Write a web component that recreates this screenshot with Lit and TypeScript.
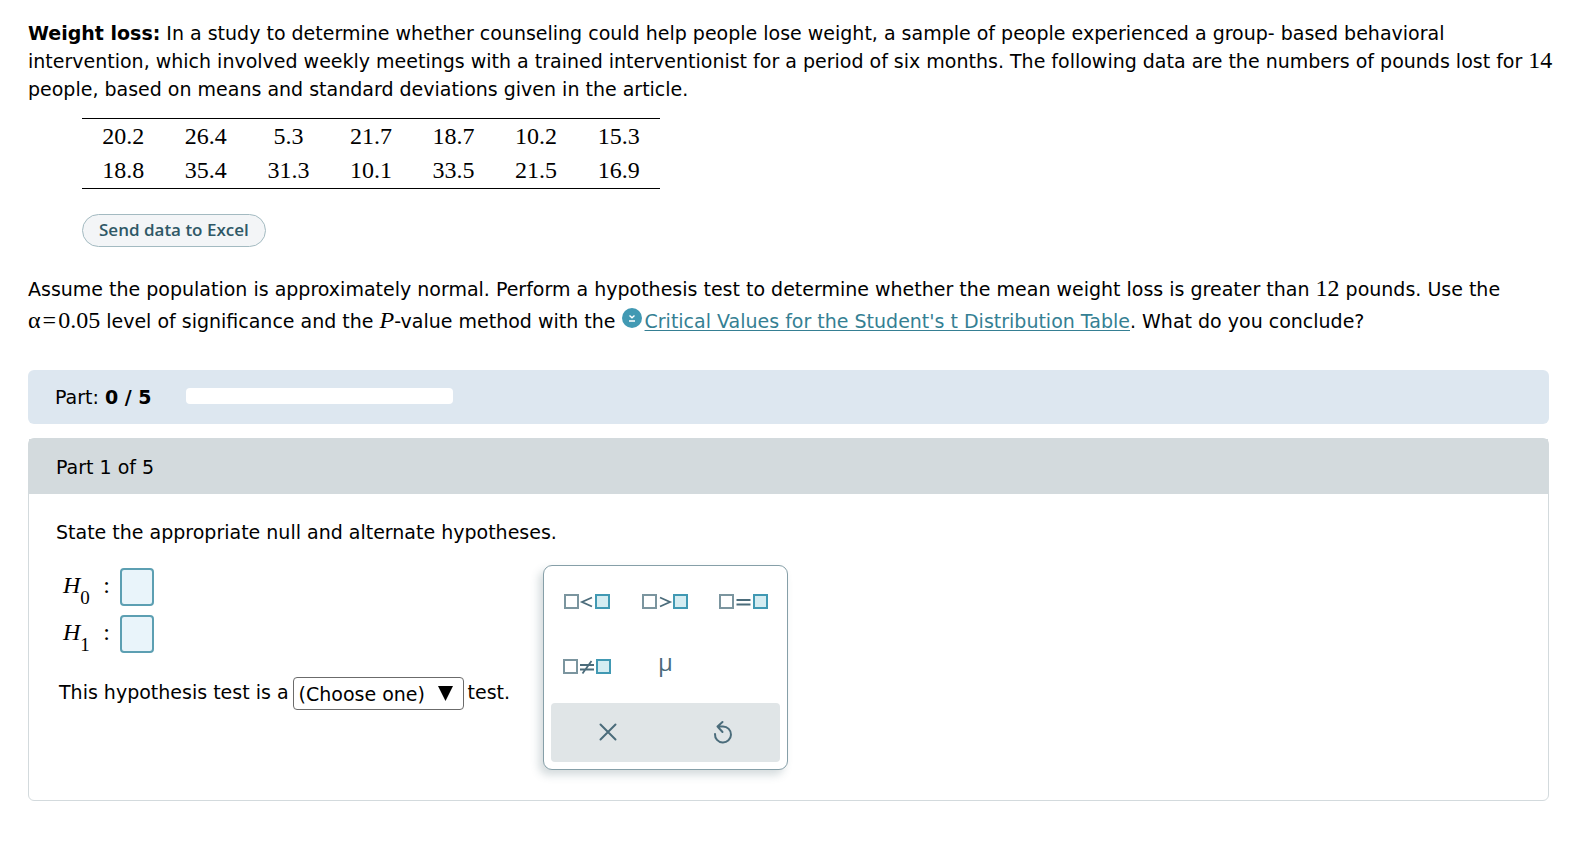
import { LitElement, html, svg, css } from "lit";
import { customElement, state } from "lit/decorators.js";

const WEIGHTS = [
  ["20.2", "26.4", "5.3", "21.7", "18.7", "10.2", "15.3"],
  ["18.8", "35.4", "31.3", "10.1", "33.5", "21.5", "16.9"],
];

const OPERATORS = [
  { label: "less than", width: 46, sign: svg`<path d="M28 4.500 18 9l10 4.500" />` },
  { label: "greater than", width: 46, sign: svg`<path d="M18 4.500 28 9l-10 4.500" />` },
  { label: "equals", width: 49, sign: svg`<path d="M17.500 7h14M17.500 11.500h14" />` },
  { label: "not equal to", width: 48, sign: svg`<path d="M17 7h14M17 11.500h14M28.500 3l-9 12.500" />` },
];

@customElement("symbol-palette")
export class SymbolPalette extends LitElement {
  static styles = css`
    :host {
      display: block;
      box-sizing: border-box;
      padding: 3px 4px 7px;
      border: 1px solid #869fa8;
      border-radius: 9px;
      background: #fff;
      box-shadow: -4px 5px 8px rgba(60, 90, 100, 0.22);
    }
    .keys {
      display: grid;
      grid-template-columns: repeat(3, 1fr);
      grid-auto-rows: 65px;
    }
    button {
      display: flex;
      align-items: center;
      justify-content: center;
      padding: 0;
      border: 0;
      background: none;
      color: #4b6c7b;
      cursor: pointer;
    }
    svg {
      display: block;
      fill: none;
      stroke: #4b6c7b;
      stroke-width: 1.8;
    }
    .blank {
      fill: #fff;
      stroke: #7b959f;
      stroke-width: 2;
    }
    .slot {
      fill: #d5edf2;
      stroke: #4199b3;
      stroke-width: 2;
    }
    .letter {
      padding-bottom: 10px;
      font: 24px/28px "Open Sans", sans-serif;
    }
    .actions {
      display: grid;
      grid-template-columns: 1fr 1fr;
      height: 59px;
      margin: 4px 3px 0;
      border-radius: 4px;
      background: #e0e5e7;
    }
    .actions button {
      padding-bottom: 2px;
    }
    .actions svg {
      stroke-width: 2;
      stroke-linecap: round;
      stroke-linejoin: round;
    }
  `;

  render() {
    return html`
      <div class="keys">
        ${OPERATORS.map(
          (op) => html`
            <button type="button" aria-label=${op.label}>
              <svg width=${op.width} height="18" viewBox="0 0 ${op.width} 18">
                <rect class="blank" x="1" y="2" width="13" height="13" />
                ${op.sign}
                <rect class="slot" x=${op.width - 14} y="2" width="13" height="13" />
              </svg>
            </button>
          `,
        )}
        <button type="button" class="letter">μ</button>
      </div>
      <div class="actions">
        <button type="button" aria-label="Clear">
          <svg width="20" height="20" viewBox="0 0 20 20"><path d="M2.500 2.500l15 15M17.500 2.500l-15 15" /></svg>
        </button>
        <button type="button" aria-label="Undo">
          <svg width="20" height="24" viewBox="0 0 20 24">
            <path d="M2 14a8 8 0 1 0 8-7.500H4.500M9.500 2 4.500 6.500l5 5.500" />
          </svg>
        </button>
      </div>
    `;
  }
}

@customElement("app-root")
export class AppRoot extends LitElement {
  static styles = css`
    :host {
      display: block;
      padding: 19px 23px 20px 28px;
      background: #fff;
      color: #000;
      font: 19px/28px Verdana, "DejaVu Sans", sans-serif;
    }
    p {
      margin: 0;
    }
    .intro {
      margin-right: -8px;
    }
    .math {
      font-family: "Liberation Serif", serif;
      font-size: 24px;
      line-height: 1;
    }
    .equals {
      margin: 0 2px;
    }
    .data {
      width: 578px;
      margin: 15px 0 0 54px;
      padding-bottom: 1px;
      border: solid #000;
      border-width: 1px 0;
      border-spacing: 0;
      table-layout: fixed;
      font: 24px/34px "Liberation Serif", serif;
      text-align: center;
    }
    .data td {
      padding: 0;
    }
    .excel {
      display: block;
      margin: 25px 0 26px 54px;
      padding: 0 16px 1px;
      border: 1px solid #a3bac1;
      border-radius: 17px;
      background: #f3f5f7;
      color: #2f5866;
      font: 600 17px/30px "Open Sans", sans-serif;
      cursor: pointer;
    }
    .task {
      line-height: 32px;
    }
    .task a {
      color: #357f93;
      text-decoration-thickness: 1px;
      text-underline-offset: 2px;
    }
    .badge {
      width: 20px;
      height: 20px;
      margin-right: 3px;
    }
    .progress {
      display: flex;
      align-items: center;
      gap: 34px;
      height: 54px;
      margin-top: 33px;
      padding: 0 27px;
      border-radius: 6px;
      background: #dde7f0;
    }
    .track {
      width: 267px;
      height: 16px;
      margin-bottom: 2px;
      border-radius: 4px;
      background: #fff;
    }
    .card {
      margin-top: 14px;
      border: 1px solid #d3dadd;
      border-radius: 6px;
    }
    .title {
      margin: 0;
      padding: 14px 27px 13px;
      background: #d3dadd;
      font: inherit;
    }
    .body {
      padding: 24px 27px 30px;
    }
    .work {
      display: flex;
      align-items: flex-start;
      margin-top: 19px;
    }
    .answers {
      width: 487px;
      flex: none;
      padding-top: 3px;
      box-sizing: border-box;
    }
    .hypothesis {
      display: flex;
      align-items: center;
      gap: 10px;
      height: 37px;
      margin: 0 0 10px 7px;
    }
    .hypothesis sub {
      font-size: 19px;
      line-height: 0;
      vertical-align: -11px;
    }
    .name {
      display: flex;
      width: 47px;
      padding-bottom: 2px;
      justify-content: space-between;
      align-items: baseline;
      white-space: nowrap;
    }
    .field {
      width: 34px;
      height: 38px;
      box-sizing: border-box;
      padding: 0 4px;
      border: 2px solid #5c9fb2;
      border-radius: 4px;
      background: #e9f4fa;
      font: 24px/1 "Liberation Serif", serif;
    }
    .kind {
      display: flex;
      align-items: center;
      gap: 4px;
      margin: 25px 0 0 3px;
      white-space: nowrap;
    }
    .kind > label,
    .kind > span {
      padding-bottom: 3px;
    }
    .picker {
      position: relative;
    }
    .picker select {
      display: block;
      appearance: none;
      width: 171px;
      height: 33px;
      padding: 0 30px 0 5px;
      border: 1px solid #6b6b6b;
      border-radius: 4px;
      background: #fff;
      color: #000;
      font: inherit;
    }
    .picker svg {
      position: absolute;
      top: 9px;
      right: 11px;
      pointer-events: none;
    }
    .palette {
      width: 245px;
      flex: none;
    }
  `;

  @state() private kind = "";

  private hypothesis(index: number) {
    return html`
      <div class="hypothesis">
        <label class="name math" for="h${index}">
          <span><i>H</i><sub>${index}</sub></span><span>:</span>
        </label>
        <input class="field" id="h${index}" type="text" />
      </div>
    `;
  }

  render() {
    return html`
      <p class="intro">
        <b>Weight loss:</b> In a study to determine whether counseling could help people lose weight, a sample of people
        experienced a group- based behavioral intervention, which involved weekly meetings with a trained interventionist
        for a period of six months. The following data are the numbers of pounds lost for <span class="math">14</span>
        people, based on means and standard deviations given in the article.
      </p>
      <table class="data">
        <tbody>
          ${WEIGHTS.map((row) => html`<tr>${row.map((value) => html`<td>${value}</td>`)}</tr>`)}
        </tbody>
      </table>
      <button class="excel" type="button">Send data to Excel</button>
      <p class="task">
        Assume the population is approximately normal. Perform a hypothesis test to determine whether the mean weight loss
        is greater than <span class="math">12</span> pounds. Use the
        <span class="math">α<span class="equals">=</span>0.05</span> level of significance and the
        <i class="math">P</i>-value method with the
        <svg class="badge" viewBox="0 0 20 20" aria-hidden="true">
          <circle cx="10" cy="10" r="10" fill="#4199b3" />
          <path d="M7.500 7.500 10 9.800l2.500-2.300M7 13h6" fill="none" stroke="#fff" stroke-width="1.400" /></svg
        ><a href="#critical-values">Critical Values for the Student's t Distribution Table</a>. What do you conclude?
      </p>
      <div class="progress">
        <span>Part: <b>0 / 5</b></span>
        <div class="track" role="progressbar" aria-label="Parts done" aria-valuemin="0" aria-valuemax="5" aria-valuenow="0"></div>
      </div>
      <section class="card">
        <h2 class="title">Part 1 of 5</h2>
        <div class="body">
          <p>State the appropriate null and alternate hypotheses.</p>
          <div class="work">
            <div class="answers">
              ${this.hypothesis(0)} ${this.hypothesis(1)}
              <div class="kind">
                <label for="kind">This hypothesis test is a</label>
                <div class="picker">
                  <select id="kind" .value=${this.kind} @change=${(e: Event) => (this.kind = (e.target as HTMLSelectElement).value)}>
                    <option value="">(Choose one)</option>
                    <option value="left">left-tailed</option>
                    <option value="right">right-tailed</option>
                    <option value="two">two-tailed</option>
                  </select>
                  <svg width="15" height="15" viewBox="0 0 15 15" aria-hidden="true"><path d="M0 0h15L7.500 15z" /></svg>
                </div>
                <span>test.</span>
              </div>
            </div>
            <symbol-palette class="palette"></symbol-palette>
          </div>
        </div>
      </section>
    `;
  }
}
